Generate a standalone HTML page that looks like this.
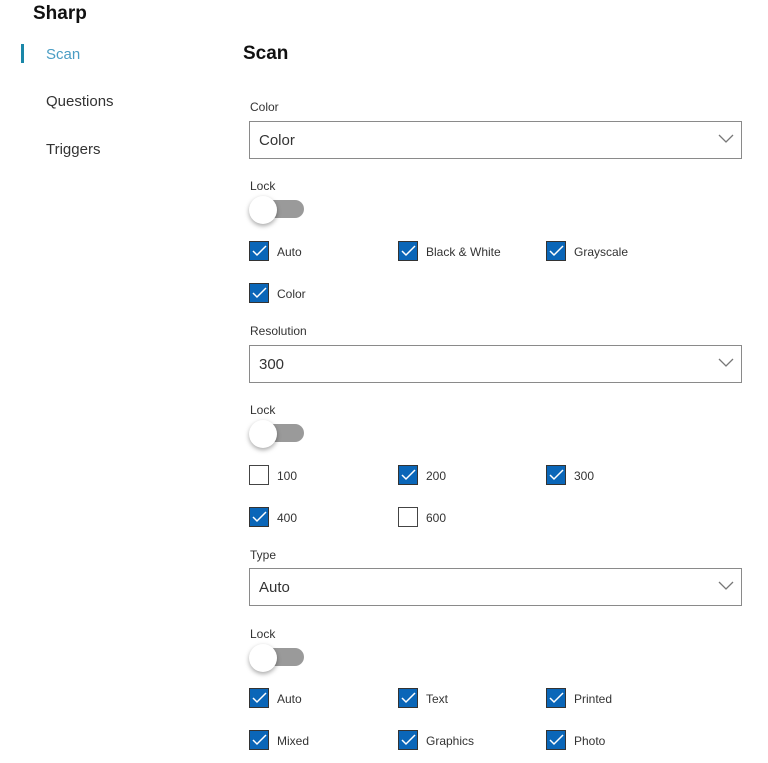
<!DOCTYPE html>
<html><head><style>
body{margin:0;width:768px;height:763px;background:#fff;font-family:"Liberation Sans",sans-serif;color:#222;position:relative;overflow:hidden}
.a{position:absolute;white-space:nowrap}
.lbl{font-size:12px;color:#333;line-height:14px}
.sel{position:absolute;left:249px;border:1px solid #8a8a8a;box-sizing:border-box;width:493px;height:38px}
.sel span{position:absolute;left:9px;top:10px;font-size:15px;color:#333}
.sel svg{position:absolute;right:7px;top:12px}
.tr{position:absolute;left:256px;width:48px;height:18px;border-radius:9px;background:#9a9a9a}
.kn{position:absolute;left:249px;width:28px;height:28px;border-radius:50%;background:#fff;box-shadow:0 2px 5px rgba(0,0,0,.35)}
.cb{position:absolute;width:20px;height:20px;box-sizing:border-box;border:1.5px solid #333;background:#0a66b8}
.cb.u{background:#fff;border-color:#444}
.cb svg{position:absolute;left:2px;top:3px}
.cl{position:absolute;font-size:12px;color:#333;line-height:14px}
</style></head><body>
<div class="a" style="left:33px;top:3px;font-size:19px;font-weight:bold;color:#111">Sharp</div>
<div class="a" style="left:21px;top:44px;width:3px;height:19px;background:#1a87a8"></div>
<div class="a" style="left:46px;top:46px;font-size:15px;color:#4a9dc4">Scan</div>
<div class="a" style="left:46px;top:93px;font-size:15px;color:#333">Questions</div>
<div class="a" style="left:46px;top:141px;font-size:15px;color:#333">Triggers</div>
<div class="a" style="left:243px;top:43px;font-size:19px;font-weight:bold;color:#111">Scan</div>

<div class="a lbl" style="left:250px;top:100px">Color</div>
<div class="sel" style="top:121px"><span>Color</span><svg width="16" height="10"><path d="M1 1L8 8L15 1" fill="none" stroke="#777" stroke-width="1.3"/></svg></div>
<div class="a lbl" style="left:250px;top:179px">Lock</div>
<div class="tr" style="top:200px"></div><div class="kn" style="top:196px"></div>
<div class="cb" style="left:249px;top:241px"><svg width="15" height="12"><path d="M1 6L5 10L14 1" fill="none" stroke="#fff" stroke-width="1.5"/></svg></div><div class="cl" style="left:277px;top:245px">Auto</div>
<div class="cb" style="left:398px;top:241px"><svg width="15" height="12"><path d="M1 6L5 10L14 1" fill="none" stroke="#fff" stroke-width="1.5"/></svg></div><div class="cl" style="left:426px;top:245px">Black &amp; White</div>
<div class="cb" style="left:546px;top:241px"><svg width="15" height="12"><path d="M1 6L5 10L14 1" fill="none" stroke="#fff" stroke-width="1.5"/></svg></div><div class="cl" style="left:574px;top:245px">Grayscale</div>
<div class="cb" style="left:249px;top:283px"><svg width="15" height="12"><path d="M1 6L5 10L14 1" fill="none" stroke="#fff" stroke-width="1.5"/></svg></div><div class="cl" style="left:277px;top:287px">Color</div>

<div class="a lbl" style="left:250px;top:324px">Resolution</div>
<div class="sel" style="top:345px"><span>300</span><svg width="16" height="10"><path d="M1 1L8 8L15 1" fill="none" stroke="#777" stroke-width="1.3"/></svg></div>
<div class="a lbl" style="left:250px;top:403px">Lock</div>
<div class="tr" style="top:424px"></div><div class="kn" style="top:420px"></div>
<div class="cb u" style="left:249px;top:465px"></div><div class="cl" style="left:277px;top:469px">100</div>
<div class="cb" style="left:398px;top:465px"><svg width="15" height="12"><path d="M1 6L5 10L14 1" fill="none" stroke="#fff" stroke-width="1.5"/></svg></div><div class="cl" style="left:426px;top:469px">200</div>
<div class="cb" style="left:546px;top:465px"><svg width="15" height="12"><path d="M1 6L5 10L14 1" fill="none" stroke="#fff" stroke-width="1.5"/></svg></div><div class="cl" style="left:574px;top:469px">300</div>
<div class="cb" style="left:249px;top:507px"><svg width="15" height="12"><path d="M1 6L5 10L14 1" fill="none" stroke="#fff" stroke-width="1.5"/></svg></div><div class="cl" style="left:277px;top:511px">400</div>
<div class="cb u" style="left:398px;top:507px"></div><div class="cl" style="left:426px;top:511px">600</div>

<div class="a lbl" style="left:250px;top:548px">Type</div>
<div class="sel" style="top:568px"><span>Auto</span><svg width="16" height="10"><path d="M1 1L8 8L15 1" fill="none" stroke="#777" stroke-width="1.3"/></svg></div>
<div class="a lbl" style="left:250px;top:627px">Lock</div>
<div class="tr" style="top:648px"></div><div class="kn" style="top:644px"></div>
<div class="cb" style="left:249px;top:688px"><svg width="15" height="12"><path d="M1 6L5 10L14 1" fill="none" stroke="#fff" stroke-width="1.5"/></svg></div><div class="cl" style="left:277px;top:692px">Auto</div>
<div class="cb" style="left:398px;top:688px"><svg width="15" height="12"><path d="M1 6L5 10L14 1" fill="none" stroke="#fff" stroke-width="1.5"/></svg></div><div class="cl" style="left:426px;top:692px">Text</div>
<div class="cb" style="left:546px;top:688px"><svg width="15" height="12"><path d="M1 6L5 10L14 1" fill="none" stroke="#fff" stroke-width="1.5"/></svg></div><div class="cl" style="left:574px;top:692px">Printed</div>
<div class="cb" style="left:249px;top:730px"><svg width="15" height="12"><path d="M1 6L5 10L14 1" fill="none" stroke="#fff" stroke-width="1.5"/></svg></div><div class="cl" style="left:277px;top:734px">Mixed</div>
<div class="cb" style="left:398px;top:730px"><svg width="15" height="12"><path d="M1 6L5 10L14 1" fill="none" stroke="#fff" stroke-width="1.5"/></svg></div><div class="cl" style="left:426px;top:734px">Graphics</div>
<div class="cb" style="left:546px;top:730px"><svg width="15" height="12"><path d="M1 6L5 10L14 1" fill="none" stroke="#fff" stroke-width="1.5"/></svg></div><div class="cl" style="left:574px;top:734px">Photo</div>
</body></html>
